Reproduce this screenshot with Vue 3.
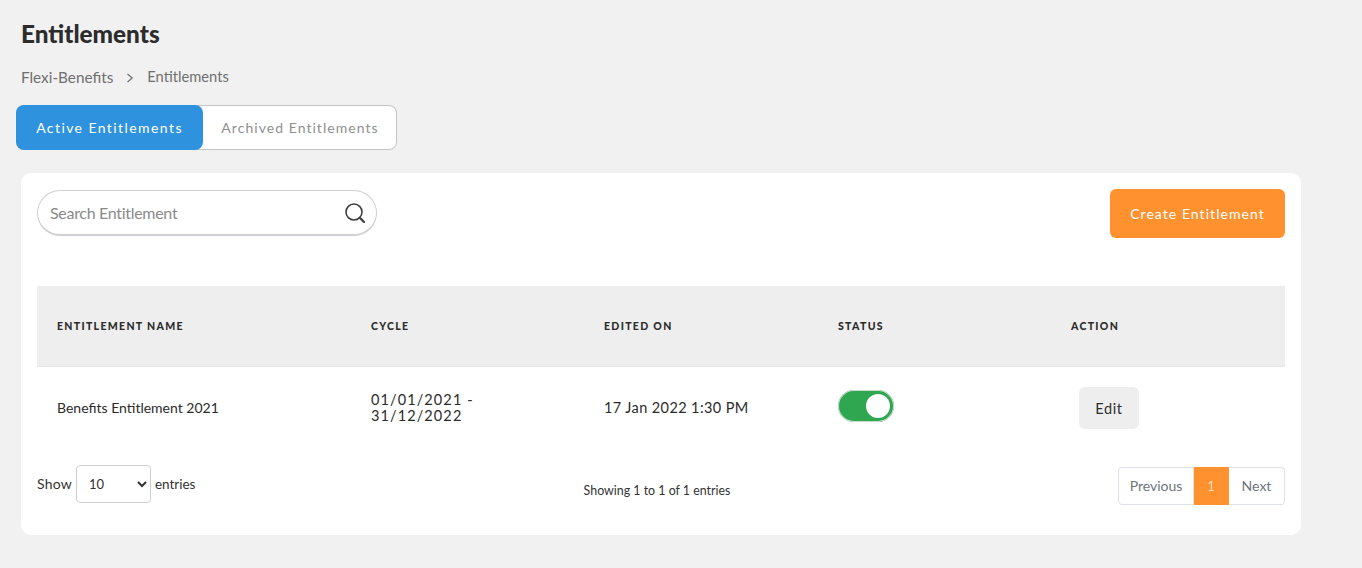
<script setup>
const entry = {
  name: 'Benefits Entitlement 2021',
  cycle: ['01/01/2021 -', '31/12/2022'],
  edited: '17 Jan 2022 1:30 PM'
}
</script>

<template>
  <div class="page">
    <h1 class="title">Entitlements</h1>
    <div class="crumbs">
      <span class="crumb-a">Flexi-Benefits</span>
      <svg class="chev" width="8" height="10" viewBox="0 0 8 10"><path d="M1.5 1 L6.2 5 L1.5 9" fill="none" stroke="#6f6f6f" stroke-width="1.2"/></svg>
      <span class="crumb-b">Entitlements</span>
    </div>
    <div class="tabs">
      <div class="tab active">Active Entitlements</div>
      <div class="tab">Archived Entitlements</div>
    </div>
    <section class="card">
      <div class="toolbar">
        <div class="search">
          <input class="search-input" placeholder="Search Entitlement" />
          <svg width="22" height="22" viewBox="0 0 22 22"><circle cx="10" cy="10" r="8" fill="none" stroke="#3f3f3f" stroke-width="1.6"/><path d="M15.8 15.8 L20 20" stroke="#3f3f3f" stroke-width="2.2" stroke-linecap="round"/></svg>
        </div>
        <button class="create">Create Entitlement</button>
      </div>
      <div class="grid head">
        <div>ENTITLEMENT NAME</div>
        <div>CYCLE</div>
        <div>EDITED ON</div>
        <div>STATUS</div>
        <div>ACTION</div>
      </div>
      <div class="grid row">
        <div class="name">{{ entry.name }}</div>
        <div class="cycle"><div v-for="l in entry.cycle" :key="l">{{ l }}</div></div>
        <div class="edited">{{ entry.edited }}</div>
        <div><span class="switch"><span class="knob"></span></span></div>
        <div><button class="edit">Edit</button></div>
      </div>
      <div class="foot">
        <div class="show">
          <span>Show</span>
          <select class="sel"><option>10</option><option>25</option></select>
          <span class="entries">entries</span>
        </div>
        <div class="info">Showing 1 to 1 of 1 entries</div>
        <div class="pager">
          <span class="pg first">Previous</span>
          <span class="pg cur">1</span>
          <span class="pg last">Next</span>
        </div>
      </div>
    </section>
  </div>
</template>

<style>
html, body { margin: 0; background: #f1f1f1; }
</style>

<style scoped>
.page {
  box-sizing: border-box;
  width: 1362px;
  height: 568px;
  padding: 20px 61px 0 21px;
  background: #f1f1f1;
  font-family: "Lato", "Open Sans", sans-serif;
  color: #2b2b2b;
  overflow: hidden;
}
.title { margin: 0; font-size: 24.3px; line-height: 28px; font-weight: 900; color: #2c2c2c; }
.crumbs { display: flex; align-items: center; margin-top: 19px; height: 20px; color: #6f6f6f; }
.crumb-a { font-size: 15.3px; }
.crumb-b { font-size: 14.7px; margin-top: -2px; }
.chev { margin: 2px 13px 0 13px; }
.tabs { display: flex; margin: 18px 0 0 -5px; width: 381px; height: 45px; background: #fff; border-radius: 8px; box-shadow: inset 0 0 0 1px #c4c4c4; }
.tab { display: flex; align-items: center; justify-content: center; width: 194px; font-size: 14px; letter-spacing: 1.05px; color: #8f8f8f; }
.tab.active { width: 187px; background: #2f92de; color: #fff; border-radius: 8px; letter-spacing: 1.42px; }
.card { margin-top: 23px; height: 362px; box-sizing: border-box; padding: 16px 16px 0; background: #fff; border-radius: 10px; }
.toolbar { display: flex; justify-content: space-between; align-items: flex-start; height: 97px; }
.search { box-sizing: border-box; display: flex; align-items: center; width: 340px; height: 46px; margin-top: 1px; padding: 0 10px 0 12px; border: 1px solid #cfcfd4; border-bottom-width: 2px; border-radius: 23px; }
.search-input { flex: 1; min-width: 0; border: 0; outline: 0; padding: 0; background: none; font: inherit; font-size: 16px; letter-spacing: -0.3px; color: #333; }
.search-input::placeholder { color: #8a8a8a; opacity: 1; }
.create { width: 175px; height: 49px; border: 0; border-radius: 6px; background: #ff922e; color: #fff; font: inherit; font-size: 14px; letter-spacing: 1.05px; }
.grid { display: grid; grid-template-columns: 314px 233px 234px 233px 234px; align-items: center; }
.grid > div { padding-left: 20px; }
.head { height: 80px; background: #eeeeee; border-bottom: 1px solid #e4e4ea; font-size: 10.5px; font-weight: 900; letter-spacing: 1.32px; color: #2c2c2c; }
.row { height: 82px; font-size: 14.5px; color: #2b2b2b; }
.name { font-size: 14px; margin-top: -2px; }
.cycle { line-height: 16px; letter-spacing: 1.1px; }
.edited { letter-spacing: 0.4px; margin-top: -2px; }
.switch { display: block; position: relative; width: 56px; height: 32px; margin-top: -4px; border-radius: 16px; background: #2fa650; box-shadow: inset 0 0 0 1px #c9dccf; }
.knob { position: absolute; right: 4px; top: 4px; width: 24px; height: 24px; border-radius: 50%; background: #fff; }
.edit { margin-left: 8px; width: 60px; height: 42px; border: 0; border-radius: 6px; background: #eeeeee; font: inherit; font-size: 14.5px; letter-spacing: 0.6px; color: #2f2f2f; }
.foot { display: grid; grid-template-columns: 1fr 1fr 1fr; align-items: center; margin-top: 13px; height: 40px; font-size: 14px; color: #333; }
.show { display: flex; align-items: center; gap: 4px; }
.show span:first-child { letter-spacing: 0.2px; }
.entries { font-size: 13.5px; }
.sel { box-sizing: border-box; width: 75px; height: 38px; padding-left: 8px; background: #fff; border: 1px solid #cfcfcf; border-radius: 4px; font: inherit; font-size: 13px; color: #333; }
.info { justify-self: center; margin: 13px 8px 0 0; font-size: 12.4px; }
.pager { justify-self: end; display: flex; height: 38px; margin-top: 5px; font-size: 14px; color: #6c757d; }
.pg { box-sizing: border-box; display: flex; align-items: center; justify-content: center; padding-bottom: 2px; border: 1px solid #dee2e6; border-left-width: 0; }
.first { width: 76px; border-left-width: 1px; border-radius: 4px 0 0 4px; }
.cur { width: 35px; background: #ff922e; border-color: #ff922e; color: #fff; font-weight: 300; }
.last { width: 56px; border-radius: 0 4px 4px 0; }
</style>
